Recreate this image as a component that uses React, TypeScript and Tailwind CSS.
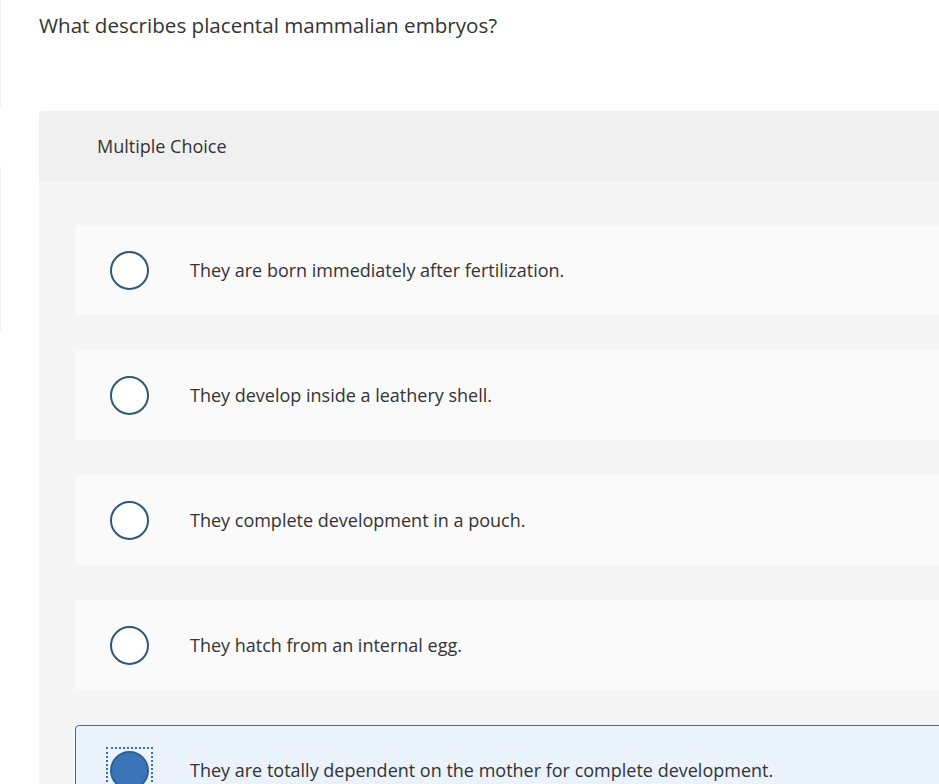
import React from 'react';

interface OptionProps {
  label: string;
  selected?: boolean;
}

const options = [
  'They are born immediately after fertilization.',
  'They develop inside a leathery shell.',
  'They complete development in a pouch.',
  'They hatch from an internal egg.',
  'They are totally dependent on the mother for complete development.',
];

const Option: React.FC<OptionProps> = ({ label, selected }) => (
  <div
    className={`flex items-center h-[90px] rounded-[4px] pl-[34px] ${
      selected ? 'bg-[#eaf2fb] border border-[#3f6f9f]' : 'bg-[#fafafa] border border-transparent'
    }`}
  >
    <div
      className={`flex items-center justify-center w-[47px] h-[47px] -ml-[4px] ${
        selected ? 'outline-2 outline-dotted outline-[#3b6fa8] -outline-offset-2' : ''
      }`}
    >
      <div
        className={`w-[39px] h-[39px] rounded-full border-2 ${
          selected ? 'bg-[#3b75b8] border-[#2f5f95]' : 'bg-white border-[#2f5878]'
        }`}
      />
    </div>
    <span className="ml-[37px] pt-[0px] text-[18px] leading-[24px] text-[#333333]">{label}</span>
  </div>
);

export default function App() {
  return (
    <div
      className="relative flex w-[939px] h-[784px] overflow-hidden bg-white"
      style={{ fontFamily: '"Open Sans", "Noto Sans", sans-serif' }}
    >
      <div className="flex flex-col w-px shrink-0">
        <div className="h-[108px] bg-[#f2f2f2]" />
        <div className="h-[59px]" />
        <div className="h-[165px] bg-[#f2f2f2]" />
      </div>
      <div className="flex flex-col pl-[38px] shrink-0">
        <h1 className="pt-[11px] text-[20.6px] leading-[28px] text-[#333333] font-normal">
          What describes placental mammalian embryos?
        </h1>
        <div className="mt-[72px] w-[1000px] rounded-tl-[4px] overflow-hidden">
          <div className="flex items-center h-[70px] pl-[58px] bg-[#f0f0f0]">
            <span className="text-[18px] text-[#333333]">Multiple Choice</span>
          </div>
          <div className="flex flex-col gap-[35px] pt-[44px] pl-[36px] bg-[#f5f5f5] h-[700px]">
            {options.map((o, i) => (
              <Option key={o} label={o} selected={i === 4} />
            ))}
          </div>
        </div>
      </div>
    </div>
  );
}
